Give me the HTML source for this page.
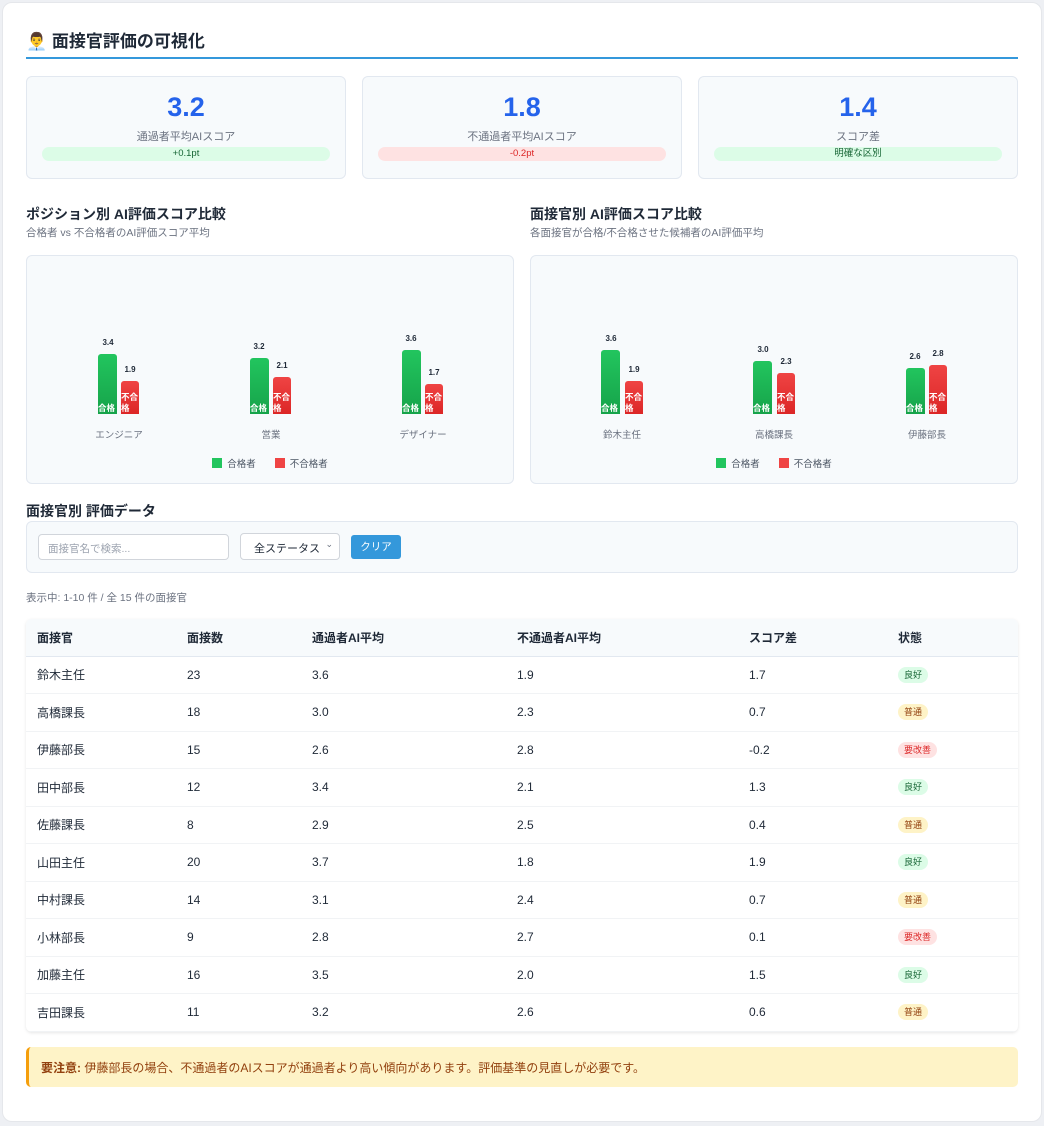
<!DOCTYPE html>
<html><head><meta charset="utf-8"><style>
*{box-sizing:border-box;margin:0;padding:0}
body{width:1044px;height:1126px;background:#eef0f4;font-family:"Liberation Sans","Noto Sans CJK JP",sans-serif;color:#1f2937;position:relative;overflow:hidden}
.card{position:absolute;left:2px;top:2px;width:1040px;height:1120px;background:#fff;border-radius:10px;border:1px solid #e5e7eb}
.abs{position:absolute}
h1{position:absolute;left:26px;top:27px;font-size:17px;font-weight:bold;color:#1f2937}
.line{position:absolute;left:26px;top:57px;width:992px;height:2px;background:#3498db}
.stat{position:absolute;top:76px;width:320px;height:103px;background:#f7fafc;border:1px solid #e2e8f0;border-radius:6px;text-align:center}
.stat .n{position:absolute;top:15px;left:0;right:0;font-size:27px;font-weight:bold;color:#2563eb}
.stat .l{position:absolute;top:51px;left:0;right:0;font-size:11px;color:#6b7280}
.stat .p{position:absolute;top:70px;left:15px;right:15px;height:14px;border-radius:7px;font-size:9.5px;line-height:14px}
.h2{position:absolute;font-size:14px;font-weight:bold;color:#1f2937}
.sub{position:absolute;font-size:10.5px;color:#6b7280}
.chart{position:absolute;top:255px;width:488px;height:229px;background:#f7fafc;border:1px solid #e2e8f0;border-radius:6px}
.b{position:absolute;width:19px;border-radius:3px 3px 0 0;color:#fff;font-size:8.5px;font-weight:bold;line-height:11px;overflow:hidden}
.g{background:linear-gradient(#22c55e,#16a34a)}
.r{background:linear-gradient(#ef4444,#dc2626);width:18px}
.b span{position:absolute;bottom:0;left:0;width:19px;word-break:break-all}
.v{position:absolute;width:30px;text-align:center;font-size:8px;font-weight:bold;color:#1f2937}
.cat{position:absolute;top:171px;width:120px;text-align:center;font-size:9.5px;color:#6b7280}
.leg{position:absolute;top:200px;left:0;right:0;text-align:center;font-size:9.5px;color:#4b5563}
.leg i{display:inline-block;width:10px;height:10px;vertical-align:-1px;margin-right:5px}
table{position:absolute;left:26px;top:619px;width:992px;border-collapse:collapse;font-size:12px;border-radius:6px;overflow:hidden;box-shadow:0 1px 3px rgba(0,0,0,.1)}
th{background:#f7fafc;text-align:left;font-weight:bold;height:37px;padding-left:11px;border-bottom:1px solid #e2e8f0;color:#1f2937}
td{height:37.5px;padding-left:11px;border-bottom:1px solid #f1f3f5;color:#1f2937}
.t{display:inline-block;font-size:9px;padding:2px 6px;border-radius:9px;line-height:12px}
.ok{background:#dcfce7;color:#166534}.mid{background:#fef3c7;color:#92400e}.bad{background:#fee2e2;color:#dc2626}
</style></head><body>
<div class="card"></div>
<h1>👨‍💼 面接官評価の可視化</h1>
<div class="line"></div>
<div class="stat" style="left:26px"><div class="n">3.2</div><div class="l">通過者平均AIスコア</div><div class="p" style="background:#dcfce7;color:#166534">+0.1pt</div></div>
<div class="stat" style="left:362px"><div class="n">1.8</div><div class="l">不通過者平均AIスコア</div><div class="p" style="background:#fee2e2;color:#dc2626">-0.2pt</div></div>
<div class="stat" style="left:698px"><div class="n">1.4</div><div class="l">スコア差</div><div class="p" style="background:#dcfce7;color:#166534">明確な区別</div></div>

<div class="h2" style="left:26px;top:204px">ポジション別 AI評価スコア比較</div>
<div class="sub" style="left:26px;top:225px">合格者 vs 不合格者のAI評価スコア平均</div>
<div class="h2" style="left:530px;top:204px">面接官別 AI評価スコア比較</div>
<div class="sub" style="left:530px;top:225px">各面接官が合格/不合格させた候補者のAI評価平均</div>

<div class="chart" style="left:26px">
<div class="b g" style="left:71px;top:98px;height:60px"><span>合格</span></div><div class="v" style="left:66px;top:82px">3.4</div>
<div class="b r" style="left:94px;top:125px;height:33px"><span>不合格</span></div><div class="v" style="left:88px;top:109px">1.9</div>
<div class="b g" style="left:223px;top:102px;height:56px"><span>合格</span></div><div class="v" style="left:217px;top:86px">3.2</div>
<div class="b r" style="left:246px;top:121px;height:37px"><span>不合格</span></div><div class="v" style="left:240px;top:105px">2.1</div>
<div class="b g" style="left:375px;top:94px;height:64px"><span>合格</span></div><div class="v" style="left:369px;top:78px">3.6</div>
<div class="b r" style="left:398px;top:128px;height:30px"><span>不合格</span></div><div class="v" style="left:392px;top:112px">1.7</div>
<div class="cat" style="left:32px">エンジニア</div><div class="cat" style="left:184px">営業</div><div class="cat" style="left:336px">デザイナー</div>
<div class="leg"><i style="background:#22c55e"></i>合格者　　<i style="background:#ef4444"></i>不合格者</div>
</div>
<div class="chart" style="left:530px">
<div class="b g" style="left:70px;top:94px;height:64px"><span>合格</span></div><div class="v" style="left:65px;top:78px">3.6</div>
<div class="b r" style="left:94px;top:125px;height:33px"><span>不合格</span></div><div class="v" style="left:88px;top:109px">1.9</div>
<div class="b g" style="left:222px;top:105px;height:53px"><span>合格</span></div><div class="v" style="left:217px;top:89px">3.0</div>
<div class="b r" style="left:246px;top:117px;height:41px"><span>不合格</span></div><div class="v" style="left:240px;top:101px">2.3</div>
<div class="b g" style="left:375px;top:112px;height:46px"><span>合格</span></div><div class="v" style="left:369px;top:96px">2.6</div>
<div class="b r" style="left:398px;top:109px;height:49px"><span>不合格</span></div><div class="v" style="left:392px;top:93px">2.8</div>
<div class="cat" style="left:31px">鈴木主任</div><div class="cat" style="left:183px">高橋課長</div><div class="cat" style="left:336px">伊藤部長</div>
<div class="leg"><i style="background:#22c55e"></i>合格者　　<i style="background:#ef4444"></i>不合格者</div>
</div>

<div class="h2" style="left:26px;top:501px">面接官別 評価データ</div>
<div class="abs" style="left:26px;top:521px;width:992px;height:52px;background:#f7fafc;border:1px solid #e2e8f0;border-radius:6px"></div>
<div class="abs" style="left:38px;top:534px;width:191px;height:26px;background:#fff;border:1px solid #d1d5db;border-radius:4px;font-size:10.5px;color:#9ca3af;padding:6px 9px">面接官名で検索...</div>
<div class="abs" style="left:240px;top:533px;width:100px;height:27px;background:#fff;border:1px solid #d1d5db;border-radius:4px;font-size:11px;color:#1f2937;padding:6px 0 0 13px;white-space:nowrap">全ステータス<span style="position:absolute;right:6px;top:5px;font-size:9px;color:#6b7280">⌄</span></div>
<div class="abs" style="left:351px;top:535px;width:50px;height:24px;background:#3498db;border-radius:3px;color:#fff;font-size:10.5px;text-align:center;line-height:24px">クリア</div>
<div class="sub" style="left:26px;top:590px">表示中: 1-10 件 / 全 15 件の面接官</div>

<table>
<tr><th style="width:150px">面接官</th><th style="width:125px">面接数</th><th style="width:205px">通過者AI平均</th><th style="width:232px">不通過者AI平均</th><th style="width:149px">スコア差</th><th>状態</th></tr>
<tr><td>鈴木主任</td><td>23</td><td>3.6</td><td>1.9</td><td>1.7</td><td><span class="t ok">良好</span></td></tr>
<tr><td>高橋課長</td><td>18</td><td>3.0</td><td>2.3</td><td>0.7</td><td><span class="t mid">普通</span></td></tr>
<tr><td>伊藤部長</td><td>15</td><td>2.6</td><td>2.8</td><td>-0.2</td><td><span class="t bad">要改善</span></td></tr>
<tr><td>田中部長</td><td>12</td><td>3.4</td><td>2.1</td><td>1.3</td><td><span class="t ok">良好</span></td></tr>
<tr><td>佐藤課長</td><td>8</td><td>2.9</td><td>2.5</td><td>0.4</td><td><span class="t mid">普通</span></td></tr>
<tr><td>山田主任</td><td>20</td><td>3.7</td><td>1.8</td><td>1.9</td><td><span class="t ok">良好</span></td></tr>
<tr><td>中村課長</td><td>14</td><td>3.1</td><td>2.4</td><td>0.7</td><td><span class="t mid">普通</span></td></tr>
<tr><td>小林部長</td><td>9</td><td>2.8</td><td>2.7</td><td>0.1</td><td><span class="t bad">要改善</span></td></tr>
<tr><td>加藤主任</td><td>16</td><td>3.5</td><td>2.0</td><td>1.5</td><td><span class="t ok">良好</span></td></tr>
<tr><td>吉田課長</td><td>11</td><td>3.2</td><td>2.6</td><td>0.6</td><td><span class="t mid">普通</span></td></tr>
</table>

<div class="abs" style="left:26px;top:1047px;width:992px;height:40px;background:#fef3c7;border-left:3px solid #f59e0b;border-radius:5px;font-size:12px;color:#92400e;padding:12px 12px"><b>要注意:</b> 伊藤部長の場合、不通過者のAIスコアが通過者より高い傾向があります。評価基準の見直しが必要です。</div>
</body></html>
